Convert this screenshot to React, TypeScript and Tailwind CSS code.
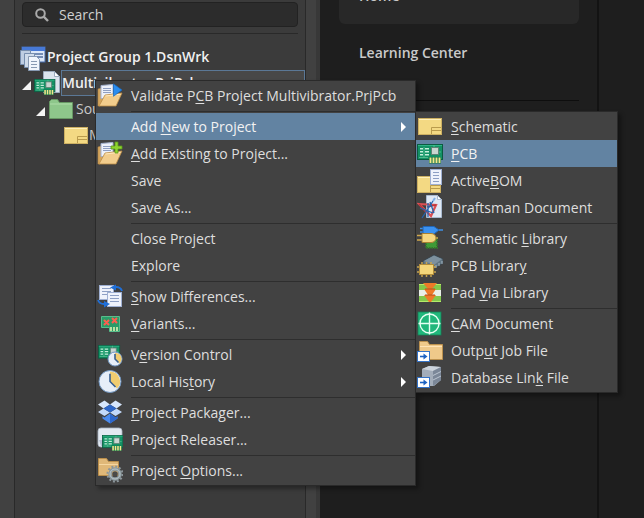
import { Fragment, type ReactNode } from 'react';

interface IconProps {
  children: ReactNode;
}

interface MenuEntry {
  label: string;
  // index of the underlined access key
  accessKey?: number;
  icon?: ReactNode;
  submenu?: boolean;
  active?: boolean;
}

function Icon({ children }: IconProps) {
  return (
    <svg viewBox="0 0 26 26" className="size-[26px] shrink-0" aria-hidden="true">
      {children}
    </svg>
  );
}

/* ---- shared icon parts ---- */

function Sheet({ x, y, w, h }: { x: number; y: number; w: number; h: number }) {
  const rows = Math.floor((h - 4) / 3);
  return (
    <g>
      <rect x={x + 0.5} y={y + 0.5} width={w - 1} height={h - 1} fill="#eef2fb" stroke="#9fb0d3" />
      {Array.from({ length: rows }, (_, i) => (
        <rect key={i} x={x + 3} y={y + 3 + i * 3} width={w - 6} height="1" fill="#8d9fc4" />
      ))}
    </g>
  );
}

function Board() {
  return (
    <g>
      <rect x="0.5" y="0.5" width="25" height="15" fill="#139165" stroke="#0b5c40" />
      <path d="M1 1.5h24" stroke="#2fb486" />
      <path d="M3 4h3v1.500H3zM3 7h3v1.500H3zM3 10h3v1.500H3zM8 4h4v1.500H8zM8 7h4v1.500H8zM8 10h4v1.500H8z" fill="#c4efdb" />
      <path d="M7 3v11M2 13.500h9M20 8h4M17 1v3" stroke="#5cc598" strokeWidth="0.8" />
      <rect x="14.500" y="3.500" width="7" height="7" fill="#c9d5d1" stroke="#5d8374" />
      <rect x="12" y="13" width="12" height="6.500" fill="#147448" />
      <path d="M13.500 13.500v5.500M16.500 13.500v5.500M19.500 13.500v5.500M22.500 13.500v5.500" stroke="#f4e88d" strokeWidth="1.900" />
    </g>
  );
}

function YellowSheet() {
  return (
    <g>
      <rect x="0.5" y="0.5" width="23" height="16" fill="#f3d983" stroke="#cdb062" />
      <path d="M1 1.500h22" stroke="#fff0b8" />
      <path d="M13.500 16V9.500H23M13.500 12.500H23" fill="none" stroke="#b99b4c" />
    </g>
  );
}

function OpenFolder() {
  return (
    <g>
      <path d="M1 6l4-1v4l4 1-6 13H1z" fill="#d3a55e" stroke="#b68845" strokeWidth="0.6" />
      <path d="M4 2.500l12-1v14H4z" fill="#edf1fa" stroke="#a3b1ce" />
      <path d="M6 5.500h8M6 7.500h8M6 9.500h8" stroke="#8f9fc2" />
      <path d="M8 12l17-2-6 13H2z" fill="#f2cd8d" stroke="#bd8e48" strokeWidth="0.8" />
      <path d="M8.500 13l15-1.800" stroke="#ffe9bd" />
    </g>
  );
}

function Clock({ cx, cy, r }: { cx: number; cy: number; r: number }) {
  return (
    <g>
      <circle cx={cx} cy={cy} r={r} fill="#e7eef8" stroke="#6f94bf" strokeWidth="1" />
      <path
        d={`M${cx} ${cy}V${cy - r + 1}A${r - 1} ${r - 1} 0 0 1 ${cx + r * 0.64} ${cy + r * 0.64}Z`}
        fill="#f0cc70"
      />
      <path
        d={`M${cx} ${cy - r * 0.7}V${cy}L${cx + r * 0.5} ${cy + r * 0.5}`}
        fill="none"
        stroke="#375f92"
        strokeWidth="1.600"
      />
    </g>
  );
}

function Shortcut({ y }: { y: number }) {
  return (
    <g>
      <rect x="0.5" y={y + 0.5} width="12" height="10" fill="#fff" stroke="#3473c8" />
      <path d={`M3 ${y + 5.5}h5`} stroke="#1d62c2" strokeWidth="1.600" />
      <path d={`M6.500 ${y + 2.5}l4 3-4 3z`} fill="#1d62c2" />
    </g>
  );
}

/* ---- icons ---- */

const validateIcon = (
  <Icon>
    <OpenFolder />
    <path d="M16.500 0.800v12.500L25 7z" fill="#2a8df0" stroke="#1767bd" strokeWidth="0.7" />
  </Icon>
);

const addExistingIcon = (
  <Icon>
    <OpenFolder />
    <path d="M18 1h3v4h4v3h-4v4h-3V8h-4V5h4z" fill="#8ed42f" stroke="#5a9a19" strokeWidth="0.8" />
  </Icon>
);

const differencesIcon = (
  <Icon>
    <Sheet x={2} y={1} w={15} h={15} />
    <Sheet x={10} y={8} w={15} h={15} />
    <path d="M25 7c-1-3-3-4-6-4" fill="none" stroke="#1f6fd8" strokeWidth="1.800" />
    <path d="M19 0.500v6l-6-3z" fill="#1f6fd8" />
    <path d="M1 16c1 3 3 4 6 4" fill="none" stroke="#1f6fd8" strokeWidth="1.800" />
    <path d="M7 17v6.500l6-3.500z" fill="#1f6fd8" />
  </Icon>
);

const variantsIcon = (
  <Icon>
    <path d="M4.500 5.500h18v15h-10v-4h-8z" fill="#2a9b68" stroke="#57bd8c" />
    <path d="M7 9l5 5M12 9l-5 5M15 7l5 5M20 7l-5 5" stroke="#ff5d4f" strokeWidth="2" />
    <path d="M14 16v4M17 16v4M20 16v4" stroke="#c9e8a9" strokeWidth="1.800" />
  </Icon>
);

const versionIcon = (
  <Icon>
    <g transform="translate(1 3) scale(.85)">
      <Board />
    </g>
    <Clock cx={18} cy={17} r={7} />
  </Icon>
);

const historyIcon = (
  <Icon>
    <Clock cx={13} cy={12.5} r={11} />
  </Icon>
);

const packagerIcon = (
  <Icon>
    <path d="M1 4.500L7.500 0.500 13 4.500 6.500 8.500zM13 4.500l5.500-4L25 4.500 19.500 8.500z" fill="#d6e6fc" />
    <path d="M1 12l5.500-3.500L13 12.500 7.500 16zM13 12.500l6.500-4L25 12l-6.500 4z" fill="#c2d9fa" />
    <path d="M6.500 8.500L13 4.500l6.500 4-6.500 4z" fill="#2c66c8" />
    <path d="M5.500 16.200l2 1.200 5.500-4 5.500 4 2-1.200v2.300L13 23.500l-7.500-5z" fill="#4b8bee" />
    <path d="M13 13.400l5.500 4 2-1.200v2.300L13 23.500z" fill="#2d67cb" />
  </Icon>
);

const releaserIcon = (
  <Icon>
    <rect x="1" y="1" width="24" height="19" rx="3" fill="#e3e9f1" stroke="#a8b4c4" strokeWidth="0.8" />
    <path d="M2 13h22v6H4z" fill="#b5c2d6" />
    <g transform="translate(5 8) scale(.82)">
      <Board />
    </g>
  </Icon>
);

const optionsIcon = (
  <Icon>
    <path d="M1.500 17.500V.5h8l2 3h10v14z" fill="#e0b878" stroke="#b98d4a" />
    <path d="M2 6.500h19" stroke="#f6d7a1" />
    <circle cx="18" cy="16" r="7.500" fill="none" stroke="#8c969b" strokeWidth="2" strokeDasharray="2 1.930" />
    <circle cx="18" cy="16" r="5" fill="none" stroke="#8c9a9f" strokeWidth="3.500" />
    <circle cx="18" cy="16" r="5" fill="none" stroke="#bac5c9" />
    <circle cx="18" cy="16" r="2.800" fill="#4a4a48" />
  </Icon>
);

const schematicIcon = (
  <Icon>
    <g transform="translate(1 4)">
      <YellowSheet />
    </g>
  </Icon>
);

const pcbIcon = (
  <Icon>
    <g transform="translate(0 3)">
      <Board />
    </g>
  </Icon>
);

const bomIcon = (
  <Icon>
    <g transform="translate(0 8)">
      <YellowSheet />
    </g>
    <Sheet x={13} y={1} w={12} h={16} />
  </Icon>
);

const draftsmanIcon = (
  <Icon>
    <path d="M9.500.5h11l4 4v18h-15z" fill="#dfe8f4" stroke="#a9bad0" />
    <path d="M20.500.5v4h4z" fill="#fff" stroke="#a9bad0" />
    <path d="M2 9l17 1-5 11z" fill="none" stroke="#dc5054" strokeWidth="2.200" />
    <path d="M2 9l7 8M19 10l-9 2" stroke="#b9383c" strokeWidth="1.500" />
    <path d="M5 23L16 6M11 8v14M3 13l13 5M13 7l4 11" stroke="#2564ad" strokeWidth="1.300" />
    <path d="M16 6l2-3" stroke="#7fb0e6" strokeWidth="2" />
  </Icon>
);

const schLibIcon = (
  <Icon>
    <path d="M9 12h11v10H9z" fill="#3f9a36" stroke="#34752d" strokeDasharray="1.500 1" strokeWidth="2" />
    <path d="M3 2.500h4M3 6h4M20 4h6" stroke="#3f8fe2" strokeWidth="1.500" />
    <path d="M6 .5h11l5 3.500-5 4H6z" fill="#3b91ef" stroke="#2166b7" />
    <path d="M0 9.500h6M0 14h6M16 12h5" stroke="#d0a84d" strokeWidth="1.500" />
    <path d="M5 7.500h9c3 0 5 2 5 4.500s-2 4.500-5 4.500H5z" fill="#f5d680" stroke="#a67e32" />
  </Icon>
);

const pcbLibIcon = (
  <Icon>
    <path d="M6 8l11-6 9 4v4l-9 6-11-4z" fill="#617582" stroke="#34434e" strokeWidth="0.8" />
    <path d="M7 8l10-5.500L25 6l-8 6z" fill="#7d919e" />
    <path d="M19 12v3M22 10v3M25 8v3" stroke="#a5b6c1" />
    <path d="M0 14h19M0 19h19M5 9v15M9.500 9v15M14 9v15" stroke="#c5a451" strokeWidth="1.500" />
    <rect x="2.500" y="11.500" width="14" height="10" fill="#f4d77b" stroke="#b28d3a" />
  </Icon>
);

const padViaIcon = (
  <Icon>
    <rect x="2" y="4" width="22" height="6" fill="#83c74c" />
    <rect x="2" y="10" width="22" height="6" fill="#e9eee7" />
    <rect x="2" y="16" width="22" height="6" fill="#83c74c" />
    <path d="M2 4.500h22M2 21.500h22" stroke="#b5eb69" />
    <path d="M6 3h14l-5 6h4l-4 6h4l-5 7h-2l-5-7h4L7 9h4z" fill="#ee7928" />
    <path d="M8 9h10M8 15h10" stroke="#b54e18" />
  </Icon>
);

const camIcon = (
  <Icon>
    <rect x="1" y="1" width="23" height="23" fill="#20b77b" stroke="#158058" strokeWidth="0.8" />
    <circle cx="12.500" cy="12.500" r="9.500" fill="none" stroke="#e5fff2" strokeWidth="1.400" />
    <path d="M12.500 1.500v22M1.500 12.500h22" stroke="#e5fff2" strokeWidth="1.400" />
  </Icon>
);

const outputIcon = (
  <Icon>
    <path d="M2.500 21.500v-18h8l2 3h13v15z" fill="#efc98a" stroke="#bc914e" />
    <path d="M3 8.500h22" stroke="#ffe3b5" />
    <Shortcut y={13} />
  </Icon>
);

const databaseIcon = (
  <Icon>
    <path d="M5 4l7-3 12 1v13l-7 6H5z" fill="#a3adba" />
    <path d="M5 4l7-3 12 1-8 4z" fill="#cdd4dc" />
    <path d="M16 6l8-4v13l-8 6z" fill="#7b8798" />
    <path d="M16 10.500l8-4M16 15l8-4" stroke="#bcc6d2" />
    <Shortcut y={12} />
  </Icon>
);

const contextMenu: MenuEntry[][] = [
  [{ label: 'Validate PCB Project Multivibrator.PrjPcb', accessKey: 10, icon: validateIcon }],
  [
    { label: 'Add New to Project', accessKey: 4, submenu: true, active: true },
    { label: 'Add Existing to Project...', accessKey: 0, icon: addExistingIcon },
    { label: 'Save' },
    { label: 'Save As...' },
  ],
  [{ label: 'Close Project' }, { label: 'Explore' }],
  [
    { label: 'Show Differences...', accessKey: 0, icon: differencesIcon },
    { label: 'Variants...', accessKey: 0, icon: variantsIcon },
  ],
  [
    { label: 'Version Control', accessKey: 1, icon: versionIcon, submenu: true },
    { label: 'Local History', accessKey: 9, icon: historyIcon, submenu: true },
  ],
  [
    { label: 'Project Packager...', accessKey: 0, icon: packagerIcon },
    { label: 'Project Releaser...', icon: releaserIcon },
  ],
  [{ label: 'Project Options...', accessKey: 8, icon: optionsIcon }],
];

const addNewMenu: MenuEntry[][] = [
  [
    { label: 'Schematic', accessKey: 0, icon: schematicIcon },
    { label: 'PCB', accessKey: 0, icon: pcbIcon, active: true },
    { label: 'ActiveBOM', accessKey: 6, icon: bomIcon },
    { label: 'Draftsman Document', icon: draftsmanIcon },
  ],
  [
    { label: 'Schematic Library', accessKey: 10, icon: schLibIcon },
    { label: 'PCB Library', accessKey: 10, icon: pcbLibIcon },
    { label: 'Pad Via Library', accessKey: 4, icon: padViaIcon },
  ],
  [
    { label: 'CAM Document', accessKey: 0, icon: camIcon },
    { label: 'Output Job File', accessKey: 4, icon: outputIcon },
    { label: 'Database Link File', accessKey: 12, icon: databaseIcon },
  ],
];

function MenuLabel({ label, accessKey }: { label: string; accessKey?: number }) {
  if (accessKey === undefined) return <span>{label}</span>;
  return (
    <span>
      {label.slice(0, accessKey)}
      <span className="underline underline-offset-2">{label[accessKey]}</span>
      {label.slice(accessKey + 1)}
    </span>
  );
}

function Menu({ name, groups, className }: { name: string; groups: MenuEntry[][]; className: string }) {
  return (
    <div
      role="menu"
      aria-label={name}
      className={`absolute border border-[#2a2a2a] bg-[#424242] py-px text-sm whitespace-nowrap text-[#dedede] shadow-[3px_3px_4px_rgba(0,0,0,0.35)] ${className}`}
    >
      {groups.map((group, i) => (
        <Fragment key={i}>
          {i > 0 && (
            <div className="flex h-1 items-center pl-[35px]">
              <div className="h-px w-full bg-[#2e2e2e]" />
            </div>
          )}
          {group.map((entry) => (
            <button
              key={entry.label}
              role="menuitem"
              aria-haspopup={entry.submenu ? 'menu' : undefined}
              className={`flex h-[27px] w-full items-center gap-2 pr-[9px] pl-px text-left ${
                entry.active ? 'bg-[#6283a2] text-[#f2f2f2]' : ''
              }`}
            >
              {entry.icon ?? <span className="w-[26px] shrink-0" />}
              <MenuLabel label={entry.label} accessKey={entry.accessKey} />
              {entry.submenu && (
                <svg viewBox="0 0 5 10" className="ml-auto h-[10px] w-[5px]" aria-hidden="true">
                  <path d="M0 0l5 5-5 5z" fill="#fff" />
                </svg>
              )}
            </button>
          ))}
        </Fragment>
      ))}
    </div>
  );
}

function Expander() {
  return (
    <svg viewBox="0 0 9 9" className="mt-1 size-[9px] shrink-0" aria-hidden="true">
      <path d="M9 0v9H0z" fill="#f4f4f4" />
    </svg>
  );
}

function ProjectTree() {
  return (
    <div role="tree" aria-label="Projects" className="mt-[10px] text-sm whitespace-nowrap text-[#c9c9c9]">
      <div role="treeitem" className="flex h-[26px] items-center gap-px pl-[5px] font-semibold text-[#f0f0f0]">
        <svg viewBox="0 0 26 26" className="mt-1 size-[26px] shrink-0" aria-hidden="true">
          <rect x="2" y="1" width="23" height="15" fill="#dce7f7" stroke="#456bab" />
          <path d="M2 1h23v4H2z" fill="#4779d6" />
          <path d="M14 8h9M14 11h9" stroke="#526f9f" strokeWidth="1.500" />
          <path d="M.5 4.500h10v14H.500z" fill="#bfcee2" stroke="#778eae" />
          <path d="M4.500 7.500h10v14h-10z" fill="#cfdbea" stroke="#778eae" />
          <path d="M8.500 10.500h8l3 3v11h-11z" fill="#f0f5fc" stroke="#8799b2" />
          <path d="M11 15.500h6M11 18.500h6M11 21.500h6" stroke="#8799b2" />
        </svg>
        Project Group 1.DsnWrk
      </div>
      <div role="treeitem" className="flex h-[26px] items-center pl-[7px] font-semibold text-[#f0f0f0]">
        <Expander />
        <svg viewBox="0 0 27 26" className="ml-[3px] h-[26px] w-[27px] shrink-0" aria-hidden="true">
          <path d="M9.500 1.500h11l5 5v16h-16z" fill="#dce4ed" stroke="#9cabbd" />
          <path d="M20.500 1.500v5h5z" fill="#fff" stroke="#9cabbd" />
          <g transform="translate(0 9) scale(.82)">
            <Board />
          </g>
        </svg>
        <span className="flex-1 border border-[#5b7896] bg-[#484848] leading-6">Multivibrator.PrjPcb</span>
      </div>
      <div role="treeitem" className="flex h-[26px] items-center pl-[21px]">
        <Expander />
        <svg viewBox="0 0 24 20" className="mr-[3px] ml-1 h-5 w-6 shrink-0" aria-hidden="true">
          <path d="M.5 19.500v-17l2-2h6l2 3h13v16z" fill="#8ec78b" stroke="#679864" />
          <path d="M1 5h22" stroke="#addca8" />
        </svg>
        Source Documents
      </div>
      <div role="treeitem" className="flex h-[26px] items-center gap-px pl-[49px]">
        <svg viewBox="0 0 24 17" className="h-[17px] w-6 shrink-0" aria-hidden="true">
          <YellowSheet />
        </svg>
        Multivibrator.SchDoc
      </div>
    </div>
  );
}

export default function App() {
  return (
    <div className="relative flex h-screen overflow-hidden bg-[#1e1e1e] font-['Open_Sans',sans-serif]">
      <aside className="flex w-80 shrink-0 border-r-4 border-[#383838] bg-[#414141]">
        <div className="w-[14px] shrink-0" />
        <div className="min-w-0 flex-1 border-x border-[#292929] bg-[#3b3b3b] pt-[2px]">
          <div className="px-[7px]">
            <label className="flex h-[25px] items-center gap-[10px] rounded border border-[#222] bg-[#2c2c2c] pl-3">
              <svg viewBox="0 0 14 14" className="size-[14px] shrink-0" aria-hidden="true">
                <circle cx="5.500" cy="5.500" r="4.300" fill="none" stroke="#aaa" strokeWidth="2" />
                <path d="M8.700 8.700L13 13" stroke="#aaa" strokeWidth="2.400" />
              </svg>
              <input
                type="text"
                aria-label="Search"
                placeholder="Search"
                className="w-full min-w-0 bg-transparent text-sm text-[#d0d0d0] outline-none placeholder:text-[#d0d0d0]"
              />
            </label>
            <div className="mt-[6px] h-px bg-[#292929]" />
          </div>
          <ProjectTree />
        </div>
        <div className="w-[10px] shrink-0" />
      </aside>

      <nav className="w-[279px] shrink-0 border-r-2 border-[#131313] pr-[18px] pl-[19px] text-sm font-semibold text-[#cacaca]">
        <a href="#home" className="-mt-8 flex h-14 items-center rounded-md bg-[#282828] pl-5">
          Home
        </a>
        <a href="#learning" className="flex h-[58px] items-center pl-5">
          Learning Center
        </a>
        <div className="mt-[18px] h-px bg-[#0e0e0e]" />
      </nav>
      <main className="flex-1" />

      <Menu name="Project" groups={contextMenu} className="top-20 left-[95px] w-[321px]" />
      <Menu name="Add New to Project" groups={addNewMenu} className="top-[111px] left-[415px] w-[203px]" />
    </div>
  );
}
